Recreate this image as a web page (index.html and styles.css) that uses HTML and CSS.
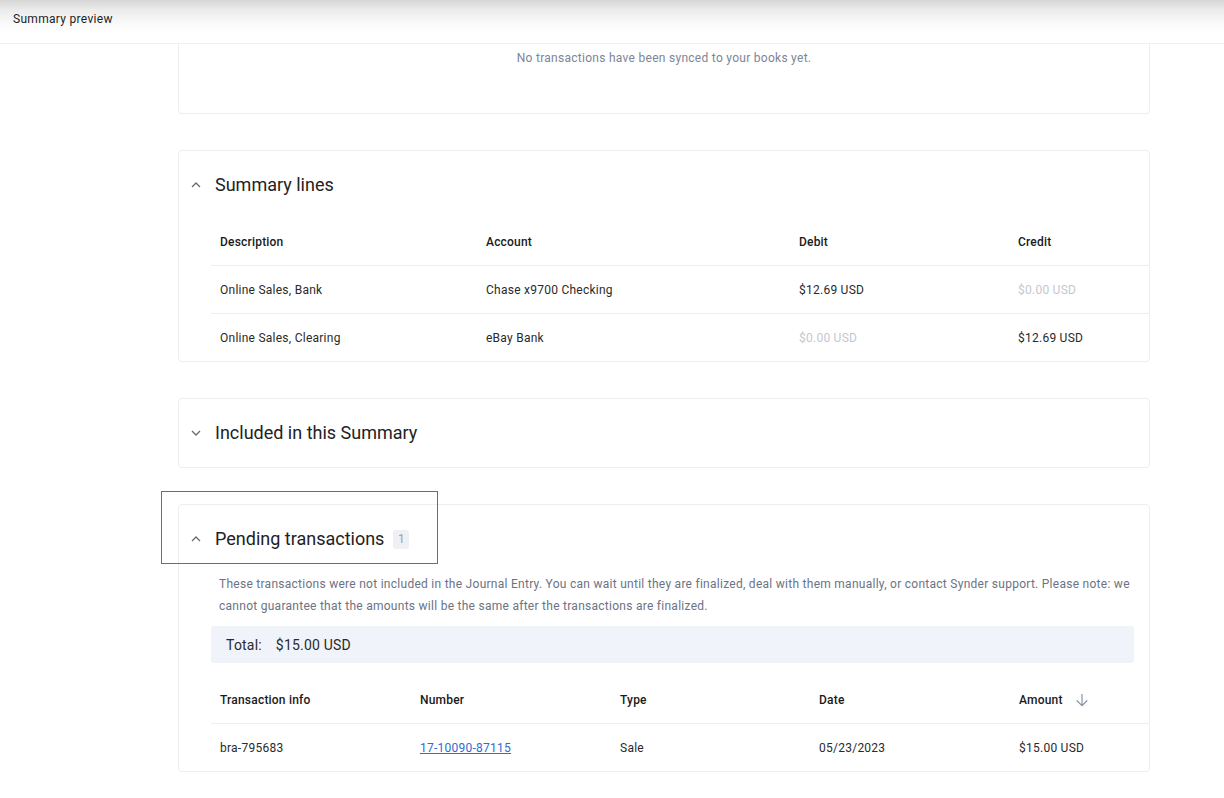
FILE: index.html
```html
<!DOCTYPE html>
<html lang="en">
<head>
<meta charset="utf-8">
<title>Summary preview</title>
<link rel="stylesheet" href="styles.css">
</head>
<body>
<header class="topbar">
  <span class="topbar-title">Summary preview</span>
</header>
<main class="content">
  <section class="card card-cut">
    <p class="empty-note">No transactions have been synced to your books yet.</p>
  </section>

  <section class="card">
    <div class="card-head">
      <svg class="chev" viewBox="0 0 10 6" width="10" height="6"><path d="M1 5 L5 1 L9 5" fill="none" stroke="#6b6b6b" stroke-width="1.3"/></svg>
      <h2 class="card-title">Summary lines</h2>
    </div>
    <div class="table lines-table">
      <div class="tr th">
        <div class="td">Description</div>
        <div class="td">Account</div>
        <div class="td">Debit</div>
        <div class="td">Credit</div>
      </div>
      <div class="tr">
        <div class="td">Online Sales, Bank</div>
        <div class="td">Chase x9700 Checking</div>
        <div class="td">$12.69 USD</div>
        <div class="td muted">$0.00 USD</div>
      </div>
      <div class="tr last">
        <div class="td">Online Sales, Clearing</div>
        <div class="td">eBay Bank</div>
        <div class="td muted">$0.00 USD</div>
        <div class="td">$12.69 USD</div>
      </div>
    </div>
  </section>

  <section class="card">
    <div class="card-head">
      <svg class="chev" viewBox="0 0 10 6" width="10" height="6"><path d="M1 1 L5 5 L9 1" fill="none" stroke="#6b6b6b" stroke-width="1.3"/></svg>
      <h2 class="card-title">Included in this Summary</h2>
    </div>
  </section>

  <section class="card pending">
    <div class="highlight"></div>
    <div class="card-head">
      <svg class="chev" viewBox="0 0 10 6" width="10" height="6"><path d="M1 5 L5 1 L9 5" fill="none" stroke="#6b6b6b" stroke-width="1.3"/></svg>
      <h2 class="card-title">Pending transactions</h2>
      <span class="badge">1</span>
    </div>
    <p class="pending-note">These transactions were not included in the Journal Entry. You can wait until they are finalized, deal with them manually, or contact Synder support. Please note: we cannot guarantee that the amounts will be the same after the transactions are finalized.</p>
    <div class="total-box">
      <span class="total-label">Total:</span>
      <span class="total-value">$15.00 USD</span>
    </div>
    <div class="table pending-table">
      <div class="tr th">
        <div class="td">Transaction info</div>
        <div class="td">Number</div>
        <div class="td">Type</div>
        <div class="td">Date</div>
        <div class="td sort">Amount
          <svg class="sort-arrow" viewBox="0 0 14 14" width="14" height="14"><path d="M7 1 V12.5 M1.8 7.5 L7 12.7 L12.2 7.5" fill="none" stroke="#8a93a8" stroke-width="1.2"/></svg>
        </div>
      </div>
      <div class="tr last">
        <div class="td">bra-795683</div>
        <div class="td"><a class="link" href="#">17-10090-87115</a></div>
        <div class="td">Sale</div>
        <div class="td">05/23/2023</div>
        <div class="td">$15.00 USD</div>
      </div>
    </div>
  </section>
</main>
</body>
</html>
```

FILE: styles.css
```css
* { box-sizing: border-box; }

html, body {
  margin: 0;
  padding: 0;
  background: #ffffff;
  font-family: Roboto, "Liberation Sans", Arial, sans-serif;
  color: #222;
}

.topbar {
  height: 44px;
  display: flex;
  align-items: flex-start;
  padding: 11px 0 0 13px;
  background: linear-gradient(to bottom, #d6d6d6 0px, #ececec 10px, #fafafa 24px, #ffffff 32px);
  border-bottom: 1px solid #eef0f3;
}

.topbar-title {
  font-size: 12px;
  line-height: 16px;
  letter-spacing: 0.3px;
  color: #1e1e1e;
}

.content {
  width: 972px;
  margin-left: 178px;
  display: flex;
  flex-direction: column;
  gap: 36px;
  padding-bottom: 30px;
}

.card {
  position: relative;
  border: 1px solid #eceef2;
  border-radius: 4px;
  background: #fff;
}

.card-cut {
  border-top: none;
  border-top-left-radius: 0;
  border-top-right-radius: 0;
  height: 70px;
}

.empty-note {
  margin: 0;
  padding-top: 6px;
  text-align: center;
  font-size: 12px;
  line-height: 16px;
  letter-spacing: 0.28px;
  color: #7d8597;
}

.card-head {
  height: 68px;
  display: flex;
  align-items: center;
  padding-left: 12px;
}

.chev {
  display: block;
  margin-right: 14px;
}

.card-title {
  margin: 0;
  font-size: 18px;
  font-weight: 400;
  color: #222;
  line-height: 24px;
}

.badge {
  margin-left: 9px;
  width: 16px;
  height: 19px;
  border-radius: 3px;
  background: #eef0f5;
  color: #9aa0ad;
  font-size: 12px;
  display: flex;
  align-items: center;
  justify-content: center;
}

.table {
  margin-left: 32px;
}

.tr {
  display: grid;
  align-items: center;
  height: 48px;
  border-bottom: 1px solid #eceef2;
  font-size: 12px;
  letter-spacing: 0.25px;
  color: #2a2a2a;
}

.tr.last {
  border-bottom: none;
  height: 47px;
}

.th {
  height: 47px;
  font-weight: 500;
  letter-spacing: 0.2px;
  color: #1a1a1a;
}

.lines-table .tr {
  grid-template-columns: 266px 313px 219px 1fr;
}

.pending-table .tr {
  grid-template-columns: 200px 200px 199px 200px 1fr;
}

.td {
  padding-left: 9px;
}

.muted {
  color: #c3c7d2;
}

.sort {
  display: flex;
  align-items: center;
}

.sort-arrow {
  margin-left: 12px;
  display: block;
}

.link {
  color: #2f6bd1;
  text-decoration: underline;
}

.pending-note {
  margin: 0 15px 0 40px;
  font-size: 12px;
  line-height: 22px;
  letter-spacing: 0.27px;
  color: #6b7385;
}

.total-box {
  margin: 9px 15px 0 32px;
  height: 37px;
  background: #f0f3fa;
  border-radius: 3px;
  display: flex;
  align-items: center;
  padding-left: 15px;
  font-size: 14px;
  letter-spacing: 0.2px;
  color: #2a2a2a;
}

.total-value {
  margin-left: 14px;
}

.pending-table {
  margin-top: 14px;
}

.highlight {
  position: absolute;
  left: -18px;
  top: -14px;
  width: 277px;
  height: 73px;
  border: 1px solid #e33b35;
  pointer-events: none;
}
```
